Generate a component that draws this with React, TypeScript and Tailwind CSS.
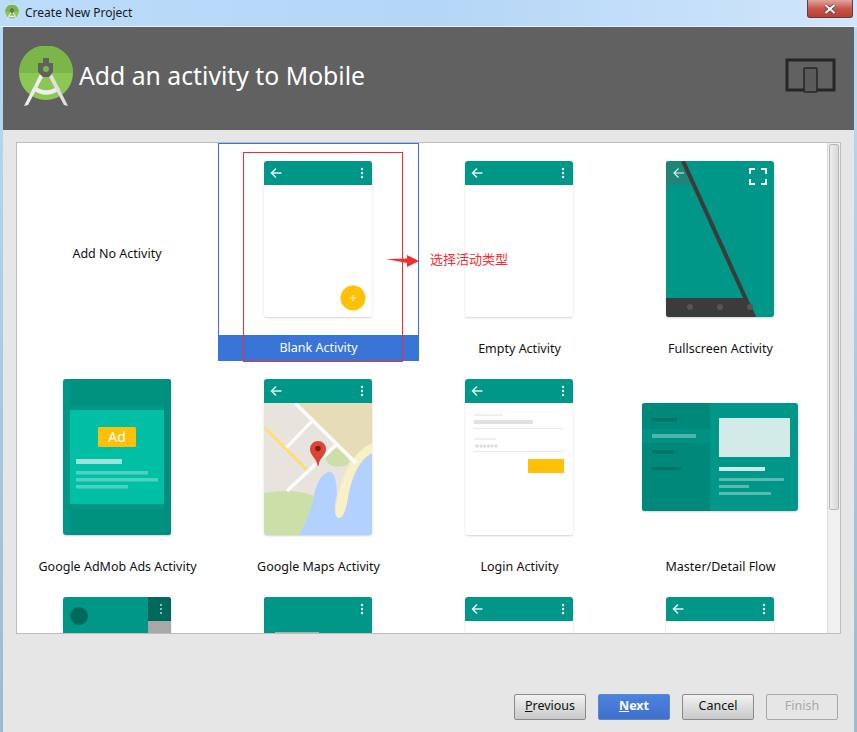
const uiFont = "font-['Noto_Sans','Liberation_Sans',sans-serif]";

function AndroidLogo({ className }: { className: string }) {
  return (
    <svg viewBox="0 0 54 60" className={className}>
      <circle cx="27" cy="27" r="27" fill="#8cc653" />
      <path d="M1 19A27 27 0 0 1 53 19L54 27L30 27L24 27L0 27Z" fill="#7ab648" />
      <path d="M15 42Q27 51 40 42" fill="none" stroke="#eeeeee" strokeWidth="4.5" />
      <path d="M21 28L5 60L9 59L24 31Z" fill="#eeeeee" />
      <path d="M33 28L49 60L45 59L30 31Z" fill="#e0e0e0" />
      <path d="M24 12H30V17H34V26L30 31H24L19 26V17H24Z" fill="#616161" />
      <circle cx="27" cy="23" r="3" fill="#7ab648" />
    </svg>
  );
}

function DeviceIcon() {
  return (
    <svg width="52" height="36" viewBox="0 0 52 36">
      <rect x="2" y="2" width="47" height="30" fill="none" stroke="#262626" strokeWidth="3" />
      <rect x="19" y="10" width="13" height="24" rx="1" fill="#5a5a5a" stroke="#262626" strokeWidth="1.5" />
    </svg>
  );
}

function AppBar({ back = true, fill = "#009688" }: { back?: boolean; fill?: string }) {
  return (
    <g>
      <rect width="108" height="24" fill={fill} />
      {back && (
        <path d="M17.5 12H8M12 7.5L7.5 12L12 16.5" fill="none" stroke="#e0f2f1" strokeWidth="1.5" />
      )}
      <circle cx="98" cy="8" r="1.2" fill="#fff" />
      <circle cx="98" cy="12" r="1.2" fill="#fff" />
      <circle cx="98" cy="16" r="1.2" fill="#fff" />
    </g>
  );
}

function BlankArt({ fab }: { fab?: boolean }) {
  return (
    <svg viewBox="0 0 108 156" className="h-full w-full">
      <rect width="108" height="156" fill="#fff" />
      <AppBar />
      {fab && (
        <g>
          <circle cx="89" cy="137" r="12.5" fill="#ffc107" />
          <path d="M86 137H92M89 134V140" stroke="#fff3c4" strokeWidth="1" />
        </g>
      )}
    </svg>
  );
}

function FullscreenArt() {
  return (
    <svg viewBox="0 0 108 156" className="h-full w-full">
      <rect width="108" height="156" fill="#009688" />
      <path d="M0 0H17L28 24H0Z" fill="#1f8576" />
      <path d="M0 137H81L90 156H0Z" fill="#3b3b3b" />
      <path d="M17 0L88 156" stroke="#3b3b3b" strokeWidth="4" />
      <circle cx="24" cy="146" r="3" fill="#555" />
      <circle cx="54" cy="146" r="3" fill="#555" />
      <circle cx="84" cy="146" r="3" fill="#555" />
      <path d="M18 12H8.5M12.5 7.5L8 12L12.5 16.5" fill="none" stroke="#e0f2f1" strokeWidth="1.2" />
      <path
        d="M84 13V8H89M95 8H100V13M100 18V23H95M89 23H84V18"
        fill="none"
        stroke="#fff"
        strokeWidth="2"
      />
    </svg>
  );
}

function AdmobArt() {
  return (
    <svg viewBox="0 0 108 156" className="h-full w-full">
      <rect width="108" height="156" fill="#009688" />
      <rect x="7" y="0" width="94" height="26" fill="#00917f" />
      <rect x="7" y="130" width="94" height="26" fill="#00917f" />
      <rect x="101" width="7" height="156" fill="#008f7f" />
      <rect x="7" y="31" width="94" height="94" rx="1" fill="#00bfa5" />
      <rect x="35" y="48" width="38" height="20" rx="1.5" fill="#ffc107" />
      <text x="54" y="63" textAnchor="middle" fontSize="14" fill="#fff" fontFamily="Noto Sans">
        Ad
      </text>
      <rect x="13" y="80" width="46" height="5" fill="#fff" opacity="0.6" />
      <rect x="13" y="92" width="72" height="3.5" fill="#fff" opacity="0.3" />
      <rect x="13" y="99" width="82" height="3.5" fill="#fff" opacity="0.3" />
      <rect x="13" y="106" width="52" height="3.5" fill="#fff" opacity="0.3" />
    </svg>
  );
}

function MapsArt() {
  return (
    <svg viewBox="0 0 108 156" className="h-full w-full">
      <rect width="108" height="156" fill="#e8e4dd" />
      <path d="M31 24H108V66L91 83Z" fill="#e6dcb8" />
      <path
        d="M108 74C96 80 88 95 84 118Q81 139 75 139Q70 139 71 125L73 115Q72 93 66 93Q56 93 50 115Q46 135 35 156H108Z"
        fill="#b3d1ff"
      />
      <path d="M108 64C90 72 78 95 73 122Q70 135 74 139Q81 139 84 118C88 95 96 80 108 74Z" fill="#f8f1c6" />
      <path d="M71 67L61 80Q66 90 80 87Q88 85 84 79Z" fill="#cddfa8" />
      <path d="M0 114Q30 109 50 117Q46 135 35 156H0Z" fill="#cddfa8" />
      <path d="M31 24L92 84" stroke="#fff" strokeWidth="3.2" />
      <path d="M48 42L22 69" stroke="#fff" strokeWidth="3.2" />
      <path d="M72 66L23 112" stroke="#fff" strokeWidth="3.2" />
      <path d="M0 48L43 91" stroke="#ffe066" strokeWidth="2.6" />
      <path d="M46 70A8 8 0 0 1 62 70C62 77 55 79 54.5 87H53.5C53 79 46 77 46 70Z" fill="#db4437" />
      <circle cx="54" cy="69.5" r="2.8" fill="#7b1f16" />
      <AppBar />
    </svg>
  );
}

function LoginArt() {
  return (
    <svg viewBox="0 0 108 156" className="h-full w-full">
      <rect width="108" height="156" fill="#fff" />
      <AppBar />
      <rect x="9" y="35" width="29" height="2" fill="#eee" />
      <rect x="9" y="41" width="59" height="4" fill="#e0e0e0" />
      <rect x="9" y="49" width="90" height="1" fill="#e8e8e8" />
      <rect x="9" y="59" width="22" height="2" fill="#eee" />
      {[12, 16, 19.5, 23.5, 27, 31].map((x) => (
        <circle key={x} cx={x} cy="67" r="1.7" fill="#ddd" />
      ))}
      <rect x="9" y="72" width="90" height="1" fill="#e8e8e8" />
      <rect x="63" y="80" width="36" height="14" fill="#ffc107" />
    </svg>
  );
}

function MasterArt() {
  return (
    <svg viewBox="0 0 156 108" className="h-full w-full">
      <rect width="156" height="108" fill="#009688" />
      <rect width="68" height="108" fill="#00897b" />
      <rect y="26" width="68" height="14" fill="#009084" />
      <rect x="10" y="15" width="25" height="3.5" fill="#00725f" />
      <rect x="10" y="31" width="44" height="4" fill="#4db6ac" />
      <rect x="10" y="47" width="22" height="3.5" fill="#00725f" />
      <rect x="10" y="64" width="29" height="3" fill="#00725f" />
      <rect x="77" y="15" width="71" height="39" fill="#d2ebe9" />
      <rect x="77" y="64" width="46" height="4" fill="#fff" opacity="0.8" />
      <rect x="77" y="75" width="65" height="3" fill="#fff" opacity="0.35" />
      <rect x="77" y="82" width="30" height="3" fill="#fff" opacity="0.35" />
      <rect x="77" y="89" width="52" height="3" fill="#fff" opacity="0.35" />
    </svg>
  );
}

function NavDrawerArt() {
  return (
    <svg viewBox="0 0 108 156" className="h-full w-full">
      <rect width="108" height="156" fill="#009688" />
      <rect x="85" width="23" height="24" fill="#00695c" />
      <rect x="85" y="24" width="23" height="132" fill="#a8a8a8" />
      <circle cx="16" cy="19" r="9" fill="#00695c" />
      <circle cx="98" cy="8" r="1" fill="#b2dfdb" />
      <circle cx="98" cy="12" r="1" fill="#b2dfdb" />
      <circle cx="98" cy="16" r="1" fill="#b2dfdb" />
    </svg>
  );
}

function ScrollingArt() {
  return (
    <svg viewBox="0 0 108 156" className="h-full w-full">
      <rect width="108" height="156" fill="#009688" />
      <AppBar back={false} />
      <rect x="11" y="35" width="44" height="20" fill="#9fb8b4" />
    </svg>
  );
}

function Card({ wide, children }: { wide?: boolean; children: React.ReactNode }) {
  return (
    <div className="flex h-[156px] w-[198px] items-center justify-center">
      <div
        className={
          wide
            ? "h-[108px] w-[156px] overflow-hidden rounded-[3px] shadow-[0_1px_2px_rgba(0,0,0,0.18)]"
            : "h-[156px] w-[108px] overflow-hidden rounded-[3px] shadow-[0_1px_2px_rgba(0,0,0,0.18)]"
        }
      >
        {children}
      </div>
    </div>
  );
}

function Cell({
  label,
  selected,
  wide,
  children,
}: {
  label?: string;
  selected?: boolean;
  wide?: boolean;
  children: React.ReactNode;
}) {
  return (
    <div
      className={
        selected
          ? "ml-[-1px] h-[218px] w-[201px] border border-b-0 border-[#3875d7] pt-[17px]"
          : "h-[218px] w-[200px] pt-[18px]"
      }
    >
      <Card wide={wide}>{children}</Card>
      {label && (
        <div
          className={
            selected
              ? "mx-[-1px] mt-[18px] flex h-[26px] items-center justify-center bg-[#3875d7] pt-[1px] text-[12.5px] text-white"
              : "mt-[18px] flex h-[26px] items-center justify-center pr-px pt-[3px] text-[12.5px] text-[#111]"
          }
        >
          {label}
        </div>
      )}
    </div>
  );
}

const btn =
  "flex h-[26px] w-[72px] items-center justify-center rounded-[2px] border pb-px text-[12.5px]";

export default function App() {
  return (
    <div
      className={`relative flex h-[732px] w-[857px] flex-col overflow-hidden bg-gradient-to-b from-[#b9dafa] to-[#9fb9cf] ${uiFont}`}
    >
      {/* Title bar */}
      <div className="flex h-[27px] shrink-0 items-start justify-between border-b border-[#e4f0fb] bg-gradient-to-r from-[#bcdcfb] via-[#b4d6f7] to-[#d0e6fb] pl-[5px] pr-[4px]">
        <div className="flex items-center gap-[6px] pt-[4px]">
          <AndroidLogo className="h-[15px] w-[14px]" />
          <span className="text-[12px] leading-[17px] text-[#1a1a1a]">Create New Project</span>
        </div>
        <div className="flex h-[18px] w-[46px] items-center justify-center rounded-b-[3px] border border-t-0 border-[#6b3a35] bg-gradient-to-b from-[#dfa69e] via-[#c8564a] to-[#b93e30]">
          <svg width="12" height="10" viewBox="0 0 12 10">
            <path d="M1.5 1L10.5 9M10.5 1L1.5 9" stroke="#3d3d3d" strokeWidth="3.4" />
            <path d="M1.5 1L10.5 9M10.5 1L1.5 9" stroke="#fff" strokeWidth="2.2" />
          </svg>
        </div>
      </div>

      {/* Dialog */}
      <div className="mx-[3px] flex min-h-0 flex-1 flex-col bg-[#e6e6e6]">
        <div className="flex h-[103px] shrink-0 items-start bg-[#616161] text-white">
          <AndroidLogo className="ml-[16px] mt-[19px] h-[60px] w-[54px]" />
          <h1 className="ml-[6px] mt-[30px] text-[24.75px] leading-[38px]">Add an activity to Mobile</h1>
          <div className="ml-auto mr-[17px] mt-[31px]">
            <DeviceIcon />
          </div>
        </div>

        <div className="mx-[13px] mt-[12px] flex h-[492px] w-[825px] shrink-0 overflow-hidden border border-[#bdbdbd] bg-white">
          <div className="flex min-w-0 flex-1 flex-col overflow-hidden pl-px">
            <div className="grid w-[804px] shrink-0 grid-cols-[repeat(4,200px)] gap-x-px">
              <div className="flex h-[218px] w-[200px] items-center justify-center pr-[2px] pt-[4px] text-[12.5px] text-[#111]">
                Add No Activity
              </div>
              <Cell label="Blank Activity" selected>
                <BlankArt fab />
              </Cell>
              <Cell label="Empty Activity">
                <BlankArt />
              </Cell>
              <Cell label="Fullscreen Activity">
                <FullscreenArt />
              </Cell>
              <Cell label="Google AdMob Ads Activity">
                <AdmobArt />
              </Cell>
              <Cell label="Google Maps Activity">
                <MapsArt />
              </Cell>
              <Cell label="Login Activity">
                <LoginArt />
              </Cell>
              <Cell label="Master/Detail Flow" wide>
                <MasterArt />
              </Cell>
              <Cell>
                <NavDrawerArt />
              </Cell>
              <Cell>
                <ScrollingArt />
              </Cell>
              <Cell>
                <BlankArt />
              </Cell>
              <Cell>
                <BlankArt />
              </Cell>
            </div>
          </div>
          {/* Scrollbar */}
          <div className="w-[13px] shrink-0 border-l border-[#dcdcdc] bg-[#f0f0f0] px-px pt-px">
            <div className="h-[366px] rounded-[2px] border border-[#b5b5b5] bg-gradient-to-r from-[#eeeeee] to-[#d8d8d8]" />
          </div>
        </div>

        {/* Buttons */}
        <div className="mr-[16px] mt-[60px] flex justify-end gap-[12px]">
          <button className={`${btn} border-[#8a8a8a] bg-gradient-to-b from-[#f2f2f2] to-[#c9c9c9] text-[#111]`}>
            <span>
              <span className="underline">P</span>revious
            </span>
          </button>
          <button className={`${btn} border-[#5e86c9] bg-gradient-to-b from-[#4c83e0] to-[#3e70cb] font-bold text-white`}>
            <span>
              <span className="underline">N</span>ext
            </span>
          </button>
          <button className={`${btn} border-[#8a8a8a] bg-gradient-to-b from-[#f2f2f2] to-[#c9c9c9] text-[#111]`}>
            Cancel
          </button>
          <button className={`${btn} border-[#a8a8a8] text-[#a8a8a8]`}>Finish</button>
        </div>
      </div>

      {/* Screenshot annotation drawn over the dialog */}
      <div className="absolute left-[243px] top-[152px] h-[210px] w-[160px] border border-[#f03030]" />
      <svg className="absolute left-[386px] top-[254px]" width="34" height="14" viewBox="0 0 34 14">
        <path d="M0 5L21 4.5L21 1L33 7L21 13L21 9Z" fill="#f03030" />
      </svg>
      <span className="absolute left-[430px] top-[250px] font-['Noto_Sans_CJK_SC',sans-serif] text-[13px] leading-[18px] text-[#f03030]">
        选择活动类型
      </span>
    </div>
  );
}
